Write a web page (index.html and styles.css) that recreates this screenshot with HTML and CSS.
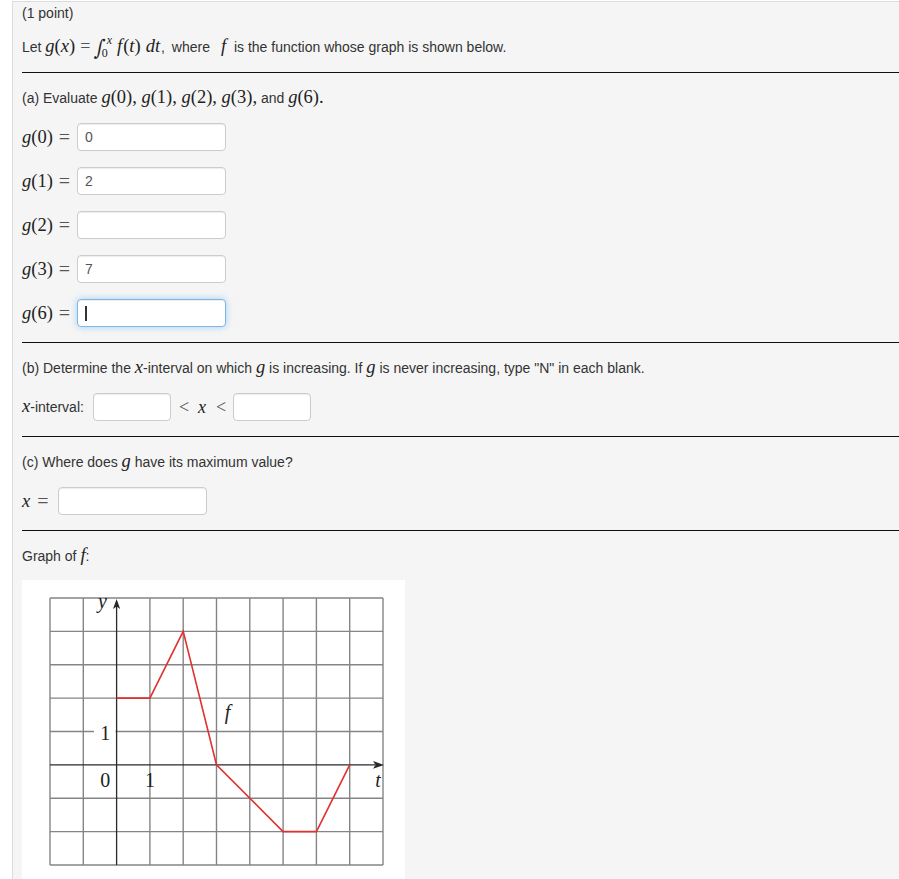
FILE: index.html
```html
<!DOCTYPE html>
<html lang="en">
<head>
<meta charset="utf-8">
<title>Problem</title>
<link rel="stylesheet" href="styles.css">
</head>
<body>
<div class="problem">
  <p class="pts">(1 point)</p>
  <p class="intro">Let <span class="m"><i>g</i>(<i>x</i>)<span class="eq eq-s">=</span><span class="int">∫</span><span class="lims"><i class="sup">x</i><span class="sub">0</span></span><i class="fx">f</i>(<i>t</i>)<span class="thin"></span><i>d</i><i class="tl">t</i></span>,<span class="gap4"></span> where <span class="m fw"><i>f</i></span> is the function whose graph is shown below.</p>
  <hr class="rule">

  <p class="q">(a) Evaluate <span class="m"><i>g</i>(0), <i>g</i>(1), <i>g</i>(2), <i>g</i>(3),</span> and <span class="m"><i>g</i>(6).</span></p>
  <div class="rows">
    <div class="row"><span class="m"><i>g</i>(0)</span><span class="eq">=</span><span class="ans w-a">0</span></div>
    <div class="row"><span class="m"><i>g</i>(1)</span><span class="eq">=</span><span class="ans w-a">2</span></div>
    <div class="row"><span class="m"><i>g</i>(2)</span><span class="eq">=</span><span class="ans w-a"></span></div>
    <div class="row"><span class="m"><i>g</i>(3)</span><span class="eq">=</span><span class="ans w-a">7</span></div>
    <div class="row"><span class="m"><i>g</i>(6)</span><span class="eq">=</span><span class="ans w-a focus"><span class="caret"></span></span></div>
  </div>
  <hr class="rule">

  <p class="q">(b) Determine the <span class="m"><i>x</i></span>-interval on which <span class="m"><i>g</i></span> is increasing. If <span class="m"><i>g</i></span> is never increasing, type "N" in each blank.</p>
  <div class="row single">
    <span><span class="m"><i>x</i></span>-interval:</span>
    <span class="ans w-b gap-l"></span>
    <span class="m rel r1">&lt;</span><span class="m rel r2"><i>x</i></span><span class="m rel r3">&lt;</span>
    <span class="ans w-b gap-r"></span>
  </div>
  <hr class="rule">

  <p class="q">(c) Where does <span class="m"><i>g</i></span> have its maximum value?</p>
  <div class="row single">
    <span class="m"><i>x</i></span><span class="eq eq-c">=</span><span class="ans w-c"></span>
  </div>
  <hr class="rule">

  <p class="q">Graph of <span class="m"><i>f</i></span>:</p>
  <div class="graph">
    <svg width="383" height="300" viewBox="0 0 383 300" xmlns="http://www.w3.org/2000/svg">
      <g stroke="#858585" stroke-width="1.4" fill="none">
        <path d="M28 18V285M61.3 18V285M127.9 18V285M161.2 18V285M194.5 18V285M227.8 18V285M261.1 18V285M294.4 18V285M327.7 18V285M361 18V285"/>
        <path d="M28 18H361M28 51.4H361M28 84.8H361M28 118.1H361M28 151.5H361M28 218.3H361M28 251.6H361M28 285H361"/>
      </g>
      <rect x="72" y="144" width="21.5" height="15" fill="#fff"/>
      <g stroke="#2a2a2a" stroke-width="1.3" fill="none">
        <path d="M94.6 285V22"/>
        <path d="M28 184.9H353"/>
      </g>
      <path d="M94.6 19L98.2 29L94.6 26.5L91 29Z" fill="#2a2a2a"/>
      <path d="M362 184.9L351 181L353.5 184.9L351 188.8Z" fill="#2a2a2a"/>
      <polyline points="94.6,118.1 127.9,118.1 161.2,51.4 194.5,184.9 261.1,251.6 294.4,251.6 327.7,184.9" fill="none" stroke="#e0312f" stroke-width="1.6"/>
      <g class="gl">
        <text x="80.5" y="28" class="it">y</text>
        <text x="83.3" y="160">1</text>
        <text x="83.3" y="207">0</text>
        <text x="128" y="207">1</text>
        <text x="205.5" y="138.5" class="it">f</text>
        <text x="356" y="207" class="it">t</text>
      </g>
    </svg>
  </div>
</div>
</body>
</html>
```

FILE: styles.css
```css
html, body {
  margin: 0;
  padding: 0;
  background: #fff;
}

body {
  font-family: "Liberation Sans", Arial, sans-serif;
  font-size: 14px;
  line-height: 20px;
  color: #333;
}

.problem {
  margin: 1px 0 0 12px;
  border-top: 1px solid #dcdcdc;
  border-left: 1px solid #dcdcdc;
  background: #f5f5f5;
  padding: 1px 0 0 9px;
  display: flex;
  flex-direction: column;
}

p {
  margin: 0;
  height: 20px;
  white-space: nowrap;
}

.pts {
  margin-bottom: 14px;
}

.intro {
  margin-bottom: 15px;
}

.rule {
  border: 0;
  border-top: 1px solid #111;
  height: 0;
  margin: 0 0 15px 0;
}

.q {
  margin-bottom: 15px;
}

/* math */
.m {
  font-family: "Liberation Serif", "Times New Roman", serif;
  font-size: 18.5px;
  line-height: 1;
  color: #222;
}

.m i {
  font-style: italic;
}

.fw {
  margin: 0 4px 0 7px;
}

.fx {
  margin: 0 1px 0 1px;
}

.tl {
  margin-right: 1px;
}

.gap4 {
  display: inline-block;
  width: 3px;
}

.eq {
  font-family: "Liberation Serif", "Times New Roman", serif;
  font-size: 20px;
  line-height: 1;
  color: #555;
  margin: 0 7px 0 6px;
}

.eq-s {
  font-size: 18px;
  margin: 0 5px 0 5px;
}

.eq-c {
  margin: 0 9px 0 7px;
}

.int {
  display: inline-block;
  font-family: "DejaVu Serif", "Liberation Serif", serif;
  font-size: 18px;
  line-height: 16px;
  transform: scaleY(1.2) skewX(-10deg);
  vertical-align: -2px;
  margin: -4px 0 -4px 0;
}

.lims {
  display: inline-flex;
  flex-direction: column;
  align-items: flex-start;
  font-size: 12px;
  line-height: 9px;
  gap: 4px;
  vertical-align: 8px;
  margin: -6px 4px -6px 0;
}

.lims .sup {
  margin-left: 2px;
}

.lims .sub {
  margin-left: -3px;
}

.thin {
  display: inline-block;
  width: 5px;
}

/* answer rows */
.rows {
  display: flex;
  flex-direction: column;
  gap: 16px;
  margin-bottom: 15px;
}

.row {
  display: flex;
  align-items: center;
  height: 28px;
}

.row.single {
  margin-bottom: 15px;
}

.ans {
  box-sizing: border-box;
  height: 28px;
  border: 1px solid #ccc;
  border-radius: 4px;
  background: #fff;
  box-shadow: inset 0 1px 1px rgba(0, 0, 0, 0.075);
  padding: 0 7px;
  display: flex;
  align-items: center;
  font-family: "Liberation Sans", Arial, sans-serif;
  font-size: 14px;
  color: #555;
}

.ans.focus {
  border-color: #7fb6e3;
  box-shadow: inset 0 1px 1px rgba(0, 0, 0, 0.075), 0 0 7px rgba(102, 175, 233, 0.55);
}

.caret {
  width: 2px;
  height: 15px;
  background: #333;
}

.w-a {
  width: 149px;
}

.w-b {
  width: 78px;
}

.w-c {
  width: 149px;
}

.gap-l {
  margin-left: 9px;
}

.gap-r {
  margin-left: 7px;
}

.rel {
  font-size: 18px;
  color: #555;
}

.r1 {
  margin-left: 8px;
}

.r2 {
  margin-left: 9px;
  color: #222;
}

.r3 {
  margin-left: 10px;
}

/* graph */
.graph {
  margin-top: -1px;
  width: 383px;
  height: 300px;
  background: #fff;
}

.graph svg {
  display: block;
}

.gl text {
  font-family: "Liberation Serif", "Times New Roman", serif;
  font-size: 20px;
  fill: #222;
  text-anchor: middle;
}

.gl text.it {
  font-style: italic;
}
```
